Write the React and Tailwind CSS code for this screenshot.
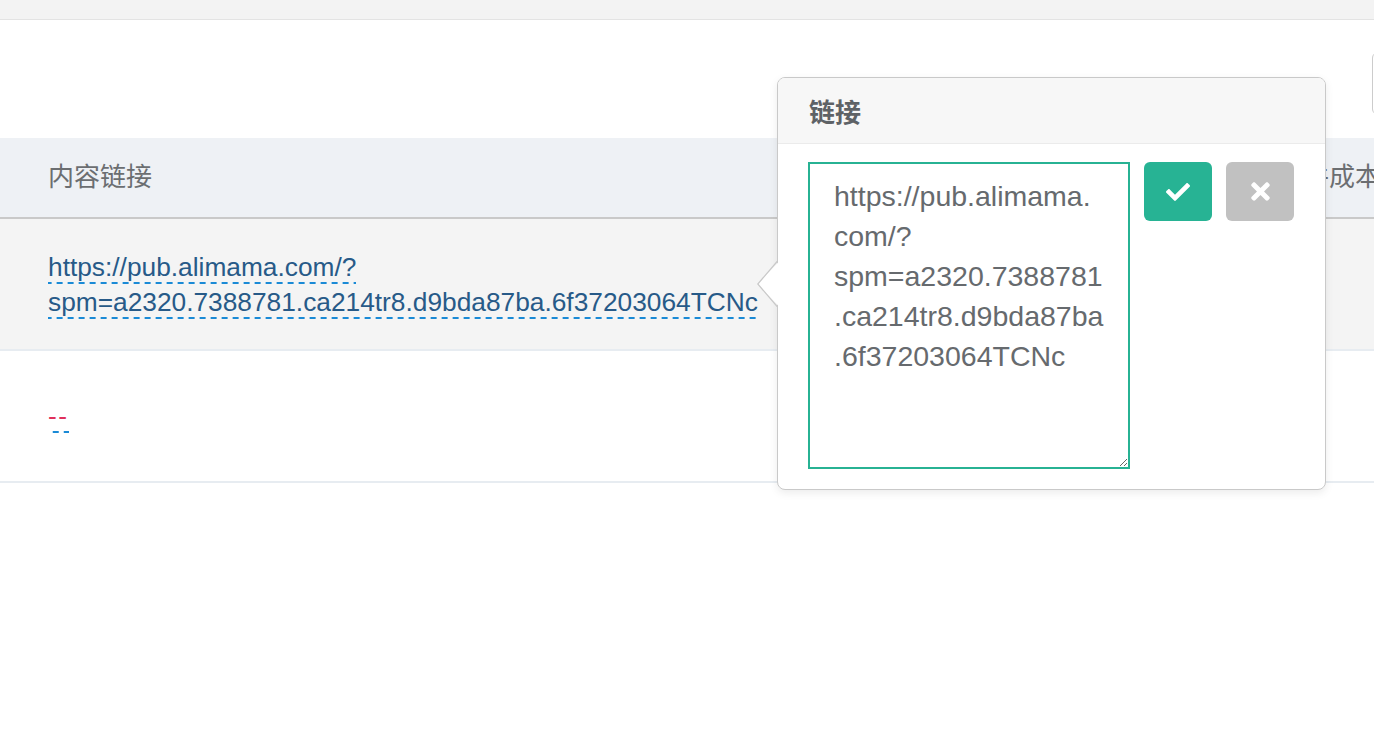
import React from "react";
import { FaCheck, FaTimes } from "react-icons/fa";

const font = "font-['Liberation_Sans','Noto_Sans_CJK_SC',sans-serif]";

export default function App() {
  const underline =
    "bg-[linear-gradient(to_right,#1a8ad6_55%,transparent_55%)] bg-[length:11px_2px] bg-repeat-x bg-bottom pb-[2px]";
  return (
    <div className={`relative w-full h-[756px] overflow-hidden bg-white ${font}`}>
      {/* top bar */}
      <div className="h-[20px] bg-[#f3f3f3] border-b border-[#e3e3e3]" />
      {/* toolbar area */}
      <div className="h-[118px] flex justify-end items-start pt-[32px]">
        <div className="w-[100px] h-[63px] -mr-[98px] shrink-0 rounded-l-[6px] border border-[#cccccc] bg-white" />
      </div>

      {/* table */}
      <div className="grid grid-cols-[1229px_1fr]">
        {/* header */}
        <div className="h-[81px] bg-[#eef1f5] border-b-2 border-[#c9c9c9] flex items-center pl-[48px] text-[26px] text-[#6b6e71]">
          内容链接
        </div>
        <div className="h-[81px] bg-[#eef1f5] border-b-2 border-[#c9c9c9] flex items-center pl-[48px] text-[26px] text-[#6b6e71] whitespace-nowrap overflow-hidden">
          单件成本
        </div>

        {/* row 1 */}
        <div className="h-[132px] bg-[#f4f4f4] border-b-2 border-[#e7ecf1] flex items-center pl-[48px] pt-[2px]">
          <div className="text-[26.3px] leading-[35px] text-[#275a88]">
            <span className={underline}>
              https://pub.alimama.com/?
              <br />
              spm=a2320.7388781.ca214tr8.d9bda87ba.6f37203064TCNc
            </span>
          </div>
        </div>
        <div className="h-[132px] bg-[#f4f4f4] border-b-2 border-[#e7ecf1]" />

        {/* row 2 */}
        <div className="h-[132px] bg-white border-b-2 border-[#e7ecf1] flex items-center pl-[48px]">
          <div className="text-[26.3px] leading-[36px] text-[#e0305a] tracking-[1.5px]">
            <span className={underline}>--</span>
          </div>
        </div>
        <div className="h-[132px] bg-white border-b-2 border-[#e7ecf1]" />
      </div>

      {/* popover */}
      <div className="absolute left-[777px] top-[77px] w-[549px] bg-white border border-[#c9c9c9] rounded-[8px] shadow-[0_3px_8px_rgba(0,0,0,0.08)]">
        <svg
          className="absolute left-[-21px] top-[183px]"
          width="22"
          height="46"
          viewBox="0 0 22 46"
        >
          <path d="M22 0.5 L1 23 L22 45.5 Z" fill="#ffffff" />
          <path d="M20.5 0 L0.8 23 L20.5 46" fill="none" stroke="#c8c8c8" strokeWidth="1.2" />
        </svg>
        <div className="h-[66px] bg-[#f7f7f7] border-b border-[#ebebeb] rounded-t-[7px] flex items-center pl-[31px] pt-[6px] text-[26px] font-bold text-[#5e6266]">
          链接
        </div>
        <div className="flex items-start gap-[14px] pl-[30px] pr-[31px] pt-[18px] pb-[20px]">
          <textarea
            className="w-[322px] h-[307px] shrink-0 border-2 border-[#27b293] bg-white pl-[24px] pr-[10px] pt-[12px] text-[28.5px] leading-[40px] text-[#666a6e] outline-none font-['Liberation_Sans',sans-serif] whitespace-pre"
            defaultValue={
              "https://pub.alimama.\ncom/?\nspm=a2320.7388781\n.ca214tr8.d9bda87ba\n.6f37203064TCNc"
            }
          />
          <button className="w-[68px] h-[59px] rounded-[6px] bg-[#27b394] flex items-center justify-center text-white">
            <FaCheck size={24} />
          </button>
          <button className="w-[68px] h-[59px] rounded-[6px] bg-[#c1c1c1] flex items-center justify-center text-white">
            <FaTimes size={27} />
          </button>
        </div>
      </div>
    </div>
  );
}
